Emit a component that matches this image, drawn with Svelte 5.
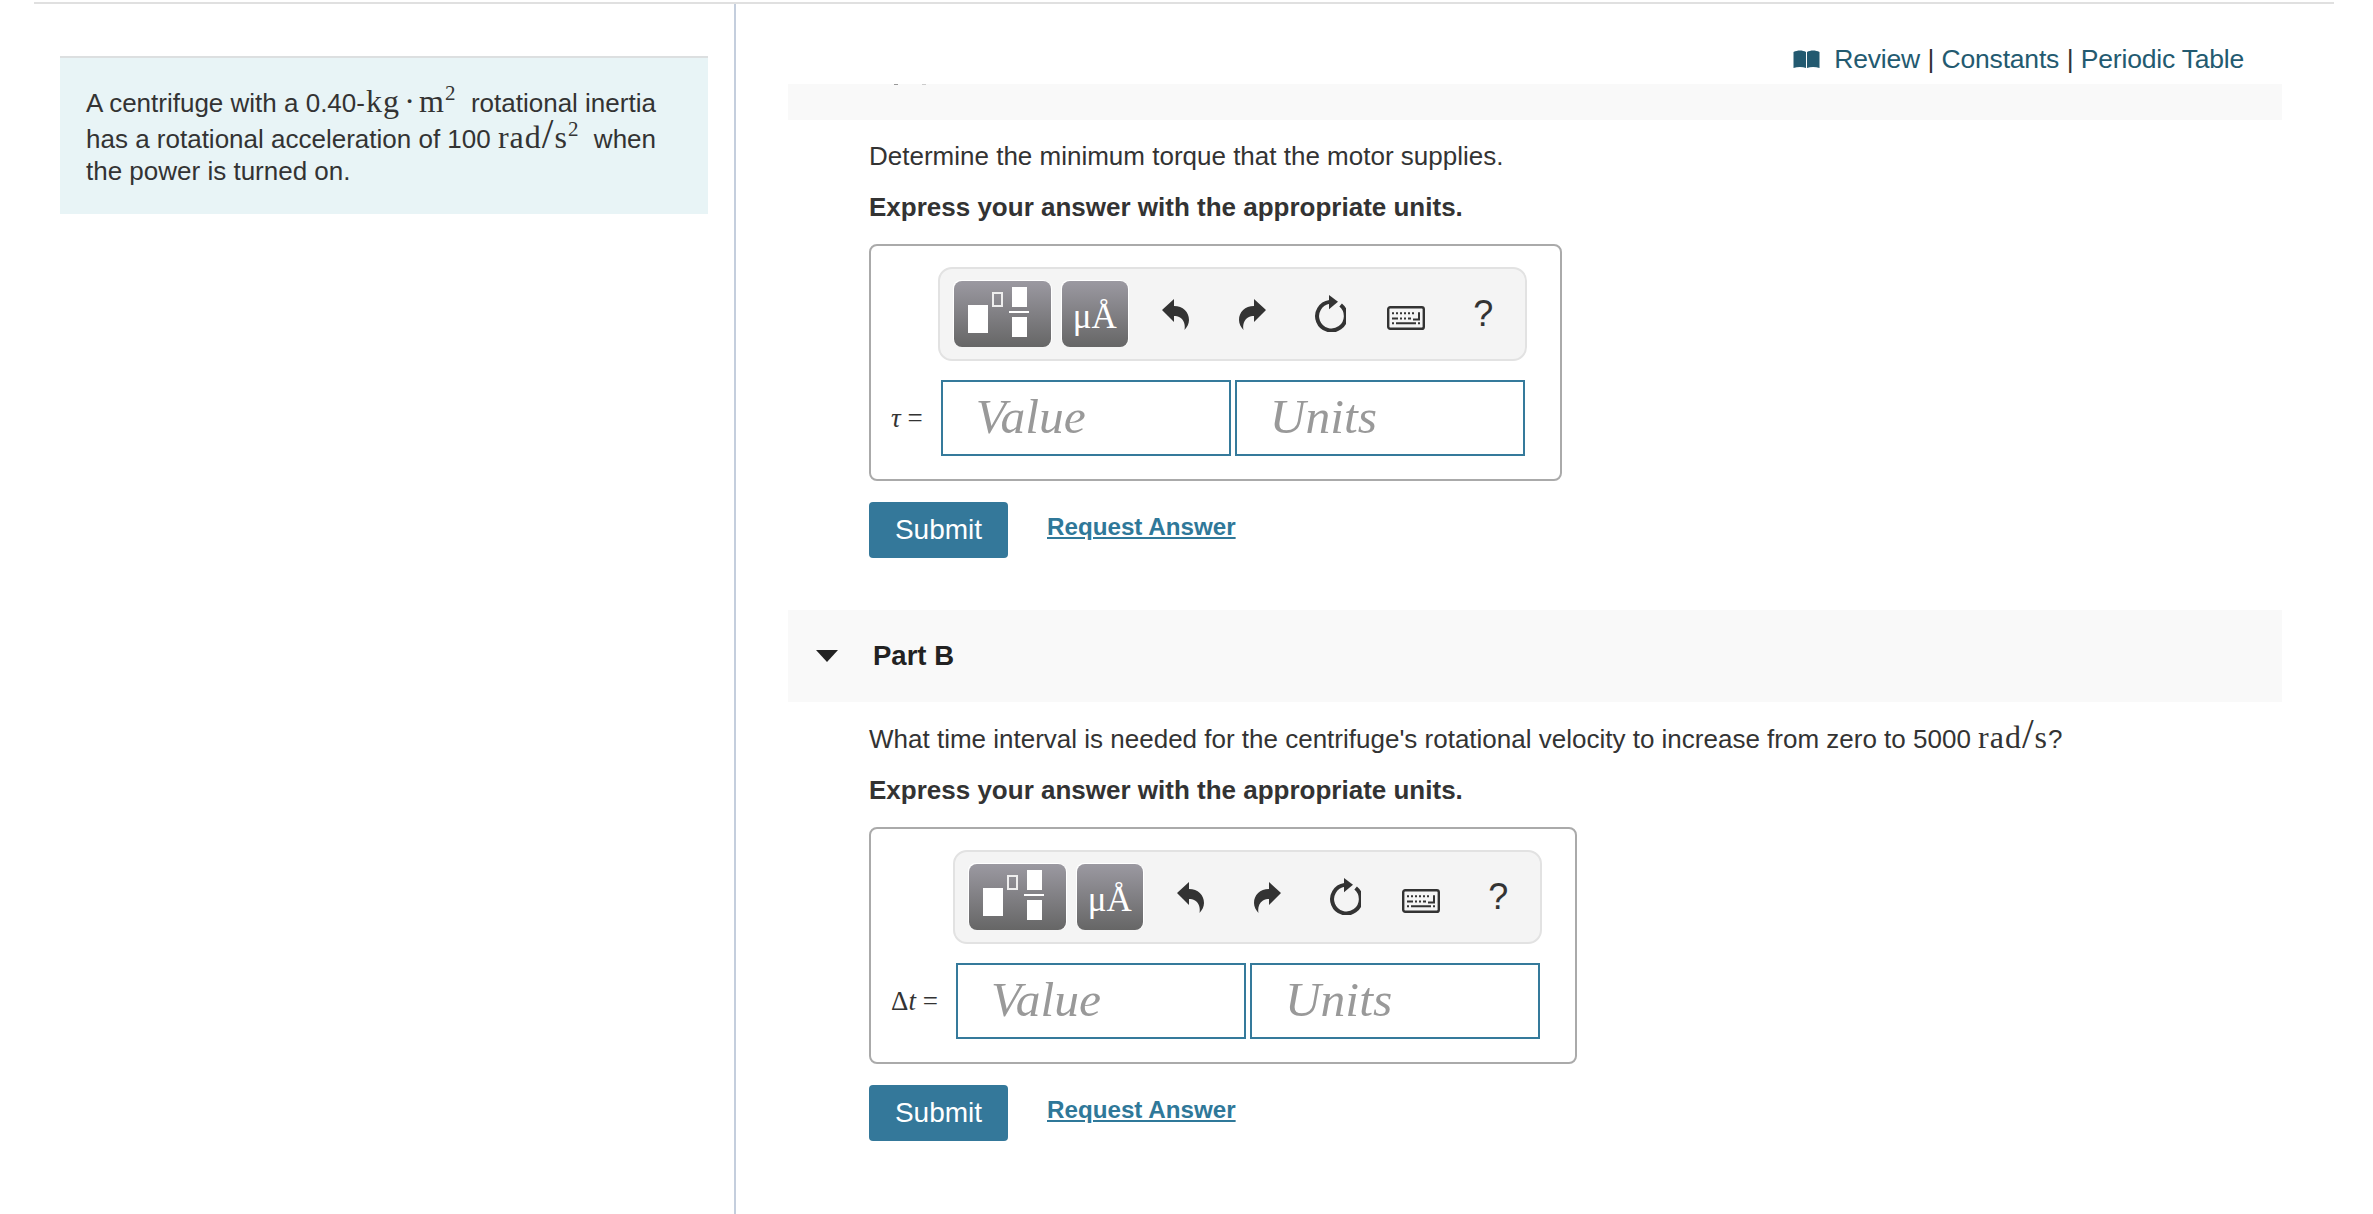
<script>
  const book = 'M0 3 C4 1 9 1 12.5 3 V19 C9 17.5 4 17.5 0 19 Z M13.5 3 C17 1 22 1 26 3 V19 C22 17.5 17 17.5 13.5 19 Z'
</script>

{#snippet toolbar()}
  <div class="toolbar">
    <button class="tool tool-frac" aria-label="Templates">
      <svg width="97" height="66" viewBox="0 0 97 66">
        <rect x="14" y="24" width="20" height="28" fill="#fff" />
        <rect x="39" y="12" width="9" height="13" fill="none" stroke="#eee" stroke-width="2" />
        <rect x="58" y="6" width="15" height="20" fill="#fff" />
        <rect x="55" y="30" width="20" height="2" fill="#fff" />
        <rect x="58" y="36" width="15" height="20" fill="#fff" />
      </svg>
    </button>
    <button class="tool tool-sym">μÅ</button>
    <div class="actions">
      <span class="action">
        <svg width="27" height="31" viewBox="0 0 27 31"><path d="M0 11 L12 0 V7 C21 7 27 13 27 21 C27 25 25 28 22.5 31 C23.5 26 22 21 18 18.5 C16 17 14 17 12 17 V23 Z" fill="#333" /></svg>
      </span>
      <span class="action">
        <svg width="27" height="31" viewBox="0 0 27 31"><path d="M27 11 L15 0 V7 C6 7 0 13 0 21 C0 25 2 28 4.5 31 C3.5 26 5 21 9 18.5 C11 17 13 17 15 17 V23 Z" fill="#333" /></svg>
      </span>
      <span class="action">
        <svg class="reset" width="34" height="37" viewBox="0 0 32 35">
          <path d="M16.5 6.5 A13.6 13.6 0 1 0 27 9.5" fill="none" stroke="#333" stroke-width="3.8" />
          <path d="M16 0 L24.5 6.5 L16 13.5 Z" fill="#333" />
        </svg>
      </span>
      <span class="action">
        <svg class="kbd" width="38" height="24" viewBox="0 0 38 23" preserveAspectRatio="none">
          <rect x="1.2" y="1.2" width="35.6" height="20.6" rx="2" fill="none" stroke="#333" stroke-width="2.4" />
          <path d="M5 6h2v2H5zM9 6h2v2H9zM13 6h2v2h-2zM17 6h2v2h-2zM21 6h2v2h-2zM25 6h2v2h-2zM30 6h3v8h-7v-2h5V6zM5 11h6v2H5zM13 11h2v2h-2zM17 11h2v2h-2zM21 11h3v2h-3zM5 15.5h2v2H5zM9 15.5h20v2H9zM31 15.5h2v2h-2z" fill="#333" />
        </svg>
      </span>
      <span class="action help">?</span>
    </div>
  </div>
{/snippet}

{#snippet answer(sym, prefix)}
  <div class="answer">
    <div class="empty"></div>
    {@render toolbar()}
    <div class="label">{prefix}<i>{sym}</i> =</div>
    <div class="fields">
      <div class="field">Value</div>
      <div class="field">Units</div>
    </div>
  </div>
  <div class="submit-row">
    <button class="submit">Submit</button>
    <a class="request" href="#request">Request Answer</a>
  </div>
{/snippet}

<div class="page">
  <div class="rule"></div>
  <div class="columns">
    <aside class="left">
      <div class="intro">
        <div class="line line1">A centrifuge with a 0.40-<span class="m kg">kg</span> <span class="m dot">·</span> <span class="m">m<sup>2</sup></span>&nbsp; rotational inertia</div>
        <div class="line line2">has a rotational acceleration of 100 <span class="m">rad<span class="slash">/</span>s<sup>2</sup></span>&nbsp; when</div>
        <div class="line line3">the power is turned on.</div>
      </div>
    </aside>

    <main class="right">
      <div class="links">
        <svg class="book" width="27" height="21" viewBox="0 0 26 21"><path d={book} fill="#235a70" /></svg>
        <a href="#review">Review</a><span class="sep">|</span><a href="#constants">Constants</a><span class="sep">|</span><a href="#table">Periodic Table</a>
      </div>

      <div class="band-top">
        <span class="speck"></span>
        <span class="speck speck2"></span>
      </div>
      <section class="part">
        <p class="question">Determine the minimum torque that the motor supplies.</p>
        <p class="question strong">Express your answer with the appropriate units.</p>
        {@render answer('τ', '')}
      </section>

      <div class="band">
        <span class="caret"></span>
        <h2>Part B</h2>
      </div>
      <section class="part part-b">
        <p class="question">What time interval is needed for the centrifuge's rotational velocity to increase from zero to 5000 <span class="m">rad<span class="slash">/</span>s</span>?</p>
        <p class="question strong">Express your answer with the appropriate units.</p>
        {@render answer('t', 'Δ')}
      </section>
    </main>
  </div>
</div>

<style>
  :global(body) {
    background: #fff;
    overflow: hidden;
  }

  .page {
    width: 2373px;
    height: 1214px;
    overflow: hidden;
    font-family: "Liberation Sans", Arial, sans-serif;
    color: #333;
    padding-top: 2px;
    box-sizing: border-box;
  }

  .rule {
    height: 2px;
    width: 2300px;
    margin-left: 34px;
    background: #e0e0e0;
  }

  .columns {
    display: flex;
    height: 1210px;
  }

  .left {
    width: 734px;
    flex: none;
    border-right: 2px solid #c4cedd;
    padding-top: 52px;
    box-sizing: content-box;
  }

  .intro {
    margin-left: 60px;
    width: 622px;
    border-top: 2px solid #dcdfe0;
    background: #e8f4f6;
    padding: 28px 0 0 26px;
    box-sizing: content-box;
    height: 128px;
    font-size: 26px;
  }

  .line {
    height: 34px;
    line-height: 34px;
    white-space: nowrap;
  }

  .line2 {
    margin-top: 2px;
  }

  .line3 {
    margin-top: -2px;
  }

  .m {
    font-family: "Liberation Serif", "Times New Roman", serif;
    font-size: 32px;
    line-height: 0;
    letter-spacing: 1px;
  }

  .kg {
    margin-left: 1px;
  }

  .dot {
    margin: 0 -4px 0 -3px;
  }

  .m sup {
    font-size: 21px;
    line-height: 0;
    vertical-align: 12px;
  }

  .slash {
    font-size: 42px;
    font-weight: 400;
    line-height: 0;
  }

  .right {
    flex: 1;
    min-width: 0;
    padding-left: 52px;
    padding-right: 91px;
  }

  .links {
    height: 50px;
    padding-top: 30px;
    display: flex;
    align-items: center;
    justify-content: flex-end;
    padding-right: 38px;
    font-size: 26.5px;
    letter-spacing: -0.2px;
  }

  .links a {
    color: #235a70;
    text-decoration: none;
  }

  .book {
    margin-right: 14px;
  }

  .sep {
    margin: 0 7.5px;
    color: #333;
  }

  .band-top {
    height: 36px;
    background: #f9f9f9;
    position: relative;
  }

  .speck {
    position: absolute;
    left: 106px;
    top: 0;
    width: 4px;
    height: 1px;
    background: #999;
  }

  .speck2 {
    left: 134px;
    background: #ccc;
  }

  .part {
    padding-left: 81px;
    padding-top: 16px;
    padding-bottom: 52px;
  }

  .part-b {
    padding-top: 17px;
  }

  .question {
    margin: 0 0 11px;
    font-size: 26px;
    line-height: 40px;
    white-space: nowrap;
  }

  .strong {
    font-weight: 700;
    margin-bottom: 17px;
  }

  .band {
    height: 92px;
    background: #f9f9f9;
    display: flex;
    align-items: center;
  }

  .caret {
    width: 0;
    height: 0;
    margin-left: 28px;
    margin-right: 35px;
    margin-top: -1px;
    border-left: 11px solid transparent;
    border-right: 11px solid transparent;
    border-top: 12px solid #222;
  }

  .band h2 {
    margin: 0;
    font-size: 27.5px;
    font-weight: 700;
    color: #222;
  }

  .answer {
    width: fit-content;
    display: grid;
    grid-template-columns: auto 587px;
    grid-row-gap: 19px;
    border: 2px solid #aaa;
    border-radius: 8px;
    padding: 21px 33px 23px 20px;
    background: #fff;
  }

  .toolbar {
    height: 94px;
    box-sizing: border-box;
    margin-left: -2px;
    width: 589px;
    display: flex;
    align-items: center;
    padding: 0 0 0 14px;
    background: #f4f4f4;
    border: 2px solid #e2e2e2;
    border-radius: 14px;
  }

  .tool {
    height: 66px;
    border: none;
    padding: 0;
    margin: 0;
    border-radius: 8px;
    background: linear-gradient(#9b99a1, #666);
    box-shadow: -1px -1px 0 #fff, 1px 0 0 #fff;
    color: #fff;
    display: block;
  }

  .tool svg {
    display: block;
  }

  .tool-frac {
    width: 97px;
    margin-right: 11px;
  }

  .tool-sym {
    width: 66px;
    font-family: "Liberation Serif", "Times New Roman", serif;
    font-size: 35px;
    line-height: 72px;
  }

  .actions {
    display: flex;
    margin-left: 9px;
  }

  .action {
    width: 77px;
    height: 40px;
    display: flex;
    align-items: center;
    justify-content: center;
  }

  .reset {
    margin-top: -2px;
  }

  .kbd {
    margin-top: 8px;
  }

  .help {
    font-size: 36px;
    color: #333;
  }

  .label {
    align-self: center;
    padding-right: 17px;
    font-family: "Liberation Serif", "Times New Roman", serif;
    font-size: 27px;
    color: #333;
    white-space: nowrap;
  }

  .fields {
    display: flex;
    gap: 4px;
    margin-left: 1px;
  }

  .field {
    width: 253px;
    height: 72px;
    border: 2px solid #357a9b;
    padding-left: 33px;
    font-family: "Liberation Serif", "Times New Roman", serif;
    font-style: italic;
    font-size: 49.5px;
    line-height: 70px;
    color: #999;
    background: #fff;
  }

  .submit-row {
    display: flex;
    margin-top: 21px;
  }

  .submit {
    width: 139px;
    height: 56px;
    padding: 0;
    border: none;
    border-radius: 4px;
    background: #34789a;
    color: #fff;
    font-family: "Liberation Sans", Arial, sans-serif;
    font-size: 28px;
  }

  .request {
    margin-left: 39px;
    margin-top: 7px;
    font-size: 24.2px;
    line-height: 36px;
    font-weight: 700;
    color: #2f7899;
  }
</style>
